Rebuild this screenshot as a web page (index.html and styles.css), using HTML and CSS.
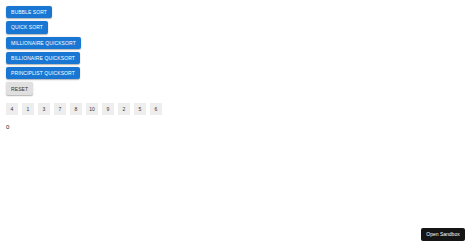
FILE: index.html
```html
<!DOCTYPE html>
<html>
<head>
<meta charset="utf-8">
<link rel="stylesheet" href="styles.css">
</head>
<body>
<div class="app">
  <div class="controls">
    <button class="btn primary">Bubble Sort</button>
    <button class="btn primary">Quick Sort</button>
    <button class="btn primary">Millionaire Quicksort</button>
    <button class="btn primary">Billionaire Quicksort</button>
    <button class="btn primary">Principlist Quicksort</button>
    <button class="btn reset">Reset</button>
  </div>
  <div class="items">
    <div class="item">4</div>
    <div class="item">1</div>
    <div class="item">3</div>
    <div class="item">7</div>
    <div class="item">8</div>
    <div class="item">10</div>
    <div class="item">9</div>
    <div class="item">2</div>
    <div class="item">5</div>
    <div class="item">6</div>
  </div>
  <div class="count">0</div>
</div>
<a class="sandbox">Open Sandbox</a>
</body>
</html>
```
FILE: styles.css
```css
html, body {
  margin: 0;
  padding: 0;
  background: #fff;
  font-family: "Liberation Sans", Arial, sans-serif;
}
.app {
  padding: 6px;
}
.controls {
  display: flex;
  flex-direction: column;
  align-items: flex-start;
  gap: 3px;
}
.btn {
  height: 12.3px;
  padding: 0 5px;
  border: none;
  border-radius: 2px;
  font-family: "Liberation Sans", Arial, sans-serif;
  font-size: 5px;
  font-weight: 500;
  text-transform: uppercase;
  letter-spacing: 0.1px;
  line-height: 12px;
  box-shadow: 0 1px 1px rgba(0,0,0,0.2), 0 0.5px 2px rgba(0,0,0,0.12);
}
.primary {
  background: #1976d2;
  color: #fff;
}
.reset {
  height: 13px;
  background: #e0e0e0;
  color: #333;
}
.items {
  display: flex;
  gap: 4px;
  margin-top: 8px;
}
.item {
  width: 12px;
  height: 12px;
  background: #eeeeee;
  color: #333;
  font-size: 5px;
  line-height: 12px;
  text-align: center;
}
.count {
  margin-top: 9px;
  font-size: 6px;
  color: #222;
}
.sandbox {
  position: fixed;
  right: 9px;
  bottom: 7px;
  width: 44px;
  height: 13px;
  background: #151515;
  color: #fff;
  border-radius: 2px;
  font-size: 5px;
  line-height: 13px;
  text-align: center;
}
```
